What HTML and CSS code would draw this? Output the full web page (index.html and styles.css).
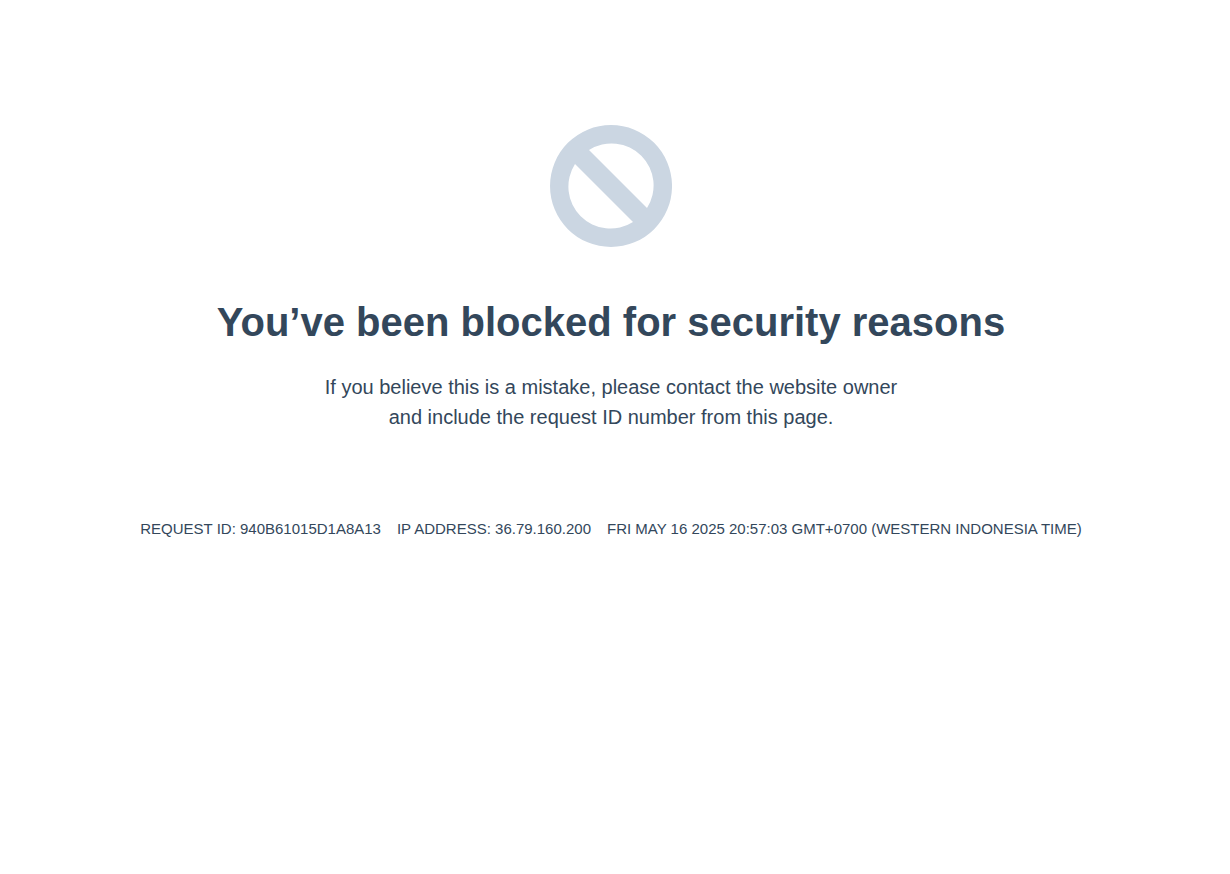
FILE: index.html
```html
<!DOCTYPE html>
<html lang="en">
<head>
    <meta charset="UTF-8">
    <meta name="viewport" content="width=device-width, initial-scale=1.0">
    <title>Access denied</title>
    <link rel="stylesheet" href="styles.css">
</head>
<body>
    <main class="blocked">
        <svg class="icon" viewBox="0 0 122 122" aria-hidden="true">
            <path fill-rule="evenodd" d="M61 0a61 61 0 1 1 0 122a61 61 0 0 1 0-122zM39 25L97 83A42 42 0 0 0 39 25zM25 39A42 42 0 0 0 83 97z"/>
        </svg>
        <h1>You’ve been blocked for security reasons</h1>
        <p class="message">If you believe this is a mistake, please contact the website owner<br>and include the request ID number from this page.</p>
        <div class="details">
            <span>Request ID: 940b61015d1a8a13</span>
            <span>IP address: 36.79.160.200</span>
            <span>Fri May 16 2025 20:57:03 GMT+0700 (Western Indonesia Time)</span>
        </div>
    </main>
</body>
</html>
```
FILE: styles.css
```css
body {
    margin: 0;
    background-color: #ffffff;
    color: #33475b;
    font-family: "Liberation Sans", Arial, sans-serif;
    font-size: 20px;
    line-height: 30px;
}
.blocked {
    display: flex;
    flex-direction: column;
    align-items: center;
    padding: 125px 18px 40px 10px;
    text-align: center;
}
.icon {
    width: 122px;
    height: 122px;
    fill: #cbd6e2;
}
h1 {
    margin: 50px 0 25px;
    font-size: 40px;
    line-height: 50px;
}
.message { margin: 0 0 85px; }
.details {
    display: flex;
    flex-wrap: wrap;
    justify-content: center;
    column-gap: 16px;
    font-size: 15px;
    line-height: 24px;
    text-transform: uppercase;
}
```
